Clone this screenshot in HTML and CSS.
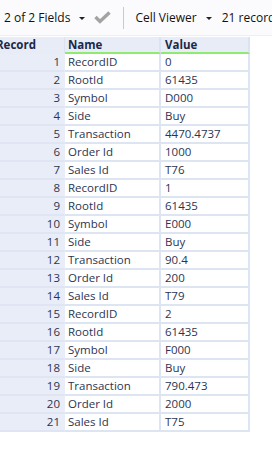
FILE: index.html
```html
<!DOCTYPE html>
<html>
<head>
  <meta charset="UTF-8">
  <title>Cell Viewer</title>
  <link rel="stylesheet" href="styles.css">
</head>
<body>
  <div class="toolbar">
    <span class="tool-text">2 of 2 Fields</span>
    <span class="caret"></span>
    <svg class="check" width="17" height="13" viewBox="0 0 17 13">
      <path d="M1.5 6 L6 10.5 L15.5 1.5" fill="none" stroke="#a3a3a3" stroke-width="3.4"/>
    </svg>
    <span class="sep"></span>
    <span class="tool-text">Cell Viewer</span>
    <span class="caret"></span>
    <span class="tool-text count">21 records</span>
  </div>

  <div class="grid-wrap">
    <table class="grid">
      <thead>
        <tr>
          <th class="rec">Record</th>
          <th class="name">Name</th>
          <th class="value">Value</th>
        </tr>
      </thead>
      <tbody id="rows"></tbody>
    </table>
  </div>

  <script>
    // field name / value pairs, three records of seven fields
    var data = [
      ["RecordID", "0"], ["RootId", "61435"], ["Symbol", "D000"], ["Side", "Buy"],
      ["Transaction", "4470.4737"], ["Order Id", "1000"], ["Sales Id", "T76"],
      ["RecordID", "1"], ["RootId", "61435"], ["Symbol", "E000"], ["Side", "Buy"],
      ["Transaction", "90.4"], ["Order Id", "200"], ["Sales Id", "T79"],
      ["RecordID", "2"], ["RootId", "61435"], ["Symbol", "F000"], ["Side", "Buy"],
      ["Transaction", "790.473"], ["Order Id", "2000"], ["Sales Id", "T75"]
    ];
    var html = "";
    for (var i = 0; i < data.length; i++) {
      html += "<tr><td class='rec'>" + (i + 1) + "</td><td class='name'>" + data[i][0] +
        "</td><td class='value'>" + data[i][1] + "</td></tr>";
    }
    document.getElementById('rows').innerHTML = html;
  </script>
</body>
</html>
```

FILE: styles.css
```css
body {
  margin: 0;
  background: #fff;
  font-family: "Open Sans", "Noto Sans", sans-serif;
  color: #1f2b47;
}
/* top toolbar */
.toolbar {
  height: 36px;
  box-sizing: border-box;
  border-bottom: 1px solid #eceff5;
  background: #fbfbfd;
  display: flex;
  align-items: center;
  padding-left: 4px;
  white-space: nowrap;
  overflow: hidden;
}
.toolbar > * {
  flex-shrink: 0;
}
.tool-text {
  font-size: 12px;
  color: #111;
}
.caret {
  width: 0;
  height: 0;
  border-left: 3px solid transparent;
  border-right: 3px solid transparent;
  border-top: 3px solid #222;
  margin: 1px 9px 0 9px;
}
.check {
  margin-right: 12px;
}
.sep {
  width: 1px;
  height: 22px;
  background: #c9c9c9;
  margin-right: 11px;
}
.count {
  margin-left: 1px;
}
/* grid */
.grid-wrap {
  margin-top: 1px;
  overflow: hidden;
}
.grid {
  border-collapse: separate;
  border-spacing: 0;
  margin-left: -10px;
  font-size: 11.5px;
}
.grid th {
  height: 15px;
  padding: 0 3px;
  text-align: left;
  font-weight: bold;
  background: #e7ecf7;
  color: #1c2847;
  border-right: 2px solid #dbe2f1;
  border-bottom: 2px solid #8fea72;
}
.grid th.rec {
  width: 65px;
  padding-left: 6px;
  border-right: 1px solid #dbe2f1;
  border-bottom: 2px solid #e7ecf7;
}
.grid td {
  height: 16px;
  padding: 0 3px;
  border-right: 2px solid #dde4f2;
  border-bottom: 2px solid #dde4f2;
  color: #2b3552;
  line-height: 16px;
}
.grid td.rec {
  background: #e9edf7;
  text-align: right;
  padding-right: 4px;
  border-right: 1px solid #e9edf7;
  border-bottom-color: #dfe5f2;
}
.grid .name {
  width: 88px;
}
.grid .value {
  width: 80px;
  padding-left: 4px;
}
```
